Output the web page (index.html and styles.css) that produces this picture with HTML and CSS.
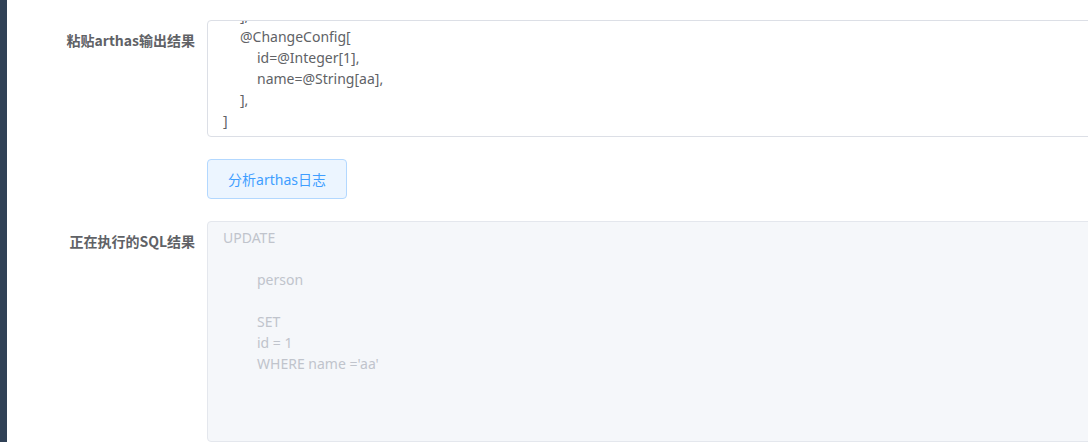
FILE: index.html
```html
<!DOCTYPE html>
<html lang="zh-CN">
<head>
<meta charset="utf-8">
<title>arthas</title>
<link rel="stylesheet" href="styles.css">
</head>
<body>
<div class="layout">
  <aside class="sidebar"></aside>
  <main class="main">
    <form class="form">
      <div class="form-item">
        <label class="form-label">粘贴arthas输出结果</label>
        <div class="form-content">
          <div class="textarea">
            <div class="scroll">
              <div class="line i1">],</div>
              <div class="line i1">@ChangeConfig[</div>
              <div class="line i2">id=@Integer[1],</div>
              <div class="line i2">name=@String[aa],</div>
              <div class="line i1">],</div>
              <div class="line">]</div>
            </div>
          </div>
        </div>
      </div>
      <div class="form-item">
        <div class="form-label"></div>
        <div class="form-content">
          <button type="button" class="btn">分析arthas日志</button>
        </div>
      </div>
      <div class="form-item">
        <label class="form-label">正在执行的SQL结果</label>
        <div class="form-content">
          <div class="textarea disabled">
            <div class="line">UPDATE</div>
            <div class="line"></div>
            <div class="line i2">person</div>
            <div class="line"></div>
            <div class="line i2">SET</div>
            <div class="line i2">id = 1</div>
            <div class="line i2">WHERE name ='aa'</div>
          </div>
        </div>
      </div>
    </form>
  </main>
</div>
</body>
</html>
```
FILE: styles.css
```css
* { box-sizing: border-box; }
html, body {
  margin: 0;
  padding: 0;
  height: 100%;
  overflow: hidden;
  background: #fff;
  font-family: "Noto Sans", "Noto Sans CJK SC", sans-serif;
  font-size: 14px;
  color: #606266;
}
.layout {
  display: flex;
  height: 442px;
}
.sidebar {
  width: 7px;
  flex: none;
  background: #304156;
}
.main {
  flex: 1;
  padding: 20px 0 0 20px;
  min-width: 0;
}
.form-item {
  display: flex;
  margin-bottom: 22px;
}
.form-label {
  width: 180px;
  flex: none;
  text-align: right;
  padding-right: 12px;
  line-height: 40px;
  font-weight: bold;
  color: #606266;
  font-family: "Noto Sans CJK SC", sans-serif;
}
.form-content {
  flex: 1;
  min-width: 0;
  margin-right: -20px;
}
.textarea {
  border: 1px solid #dcdfe6;
  border-radius: 4px;
  height: 117px;
  overflow: hidden;
  padding: 5px 15px;
  line-height: 21px;
  color: #606266;
}
.scroll {
  margin-top: -21px;
}
.textarea.disabled {
  background: #f5f7fa;
  border-color: #e4e7ed;
  color: #c0c4cc;
  height: 221px;
}
.line {
  height: 21px;
  white-space: pre;
}
.i1 { padding-left: 17px; }
.i2 { padding-left: 34px; }
.btn {
  width: 140px;
  height: 40px;
  border: 1px solid #b3d8ff;
  background: #ecf5ff;
  color: #409eff;
  border-radius: 4px;
  font-size: 14px;
  font-family: "Noto Sans", "Noto Sans CJK SC", sans-serif;
  padding: 0;
  cursor: pointer;
}
```
